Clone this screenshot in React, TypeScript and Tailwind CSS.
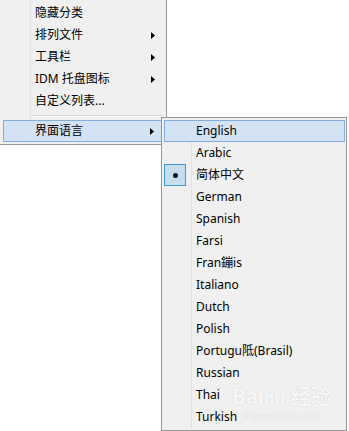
import React from 'react';

const mainItems: { label: string; arrow?: boolean }[] = [
  { label: '隐藏分类' },
  { label: '排列文件', arrow: true },
  { label: '工具栏', arrow: true },
  { label: 'IDM 托盘图标', arrow: true },
  { label: '自定义列表...' },
];

const languages = [
  'English',
  'Arabic',
  '简体中文',
  'German',
  'Spanish',
  'Farsi',
  'Fran鏰is',
  'Italiano',
  'Dutch',
  'Polish',
  'Portugu阺(Brasil)',
  'Russian',
  'Thai',
  'Turkish',
];

const Arrow = () => (
  <svg width="4" height="7" viewBox="0 0 4 7" className="ml-auto mr-[8px] shrink-0">
    <polygon points="0,0 4,3.5 0,7" fill="#000" />
  </svg>
);

const App: React.FC = () => {
  return (
    <div
      className="relative w-[349px] h-[431px] bg-white overflow-hidden text-[12px] text-black"
      style={{ fontFamily: '"Noto Sans", "Noto Sans CJK SC", sans-serif' }}
    >
      {/* main context menu */}
      <div className="absolute left-[-1px] top-[-1px] w-[168px] border border-[#979797] bg-[#f0f0f0] px-[3px] py-[2px]">
        <div className="absolute left-[30px] top-0 bottom-0 w-px bg-[#e2e2e2]" />
        {mainItems.map(item => (
          <div key={item.label} className="relative flex items-center h-[22px] pl-[32px]">
            <span className="leading-none">{item.label}</span>
            {item.arrow && <Arrow />}
          </div>
        ))}
        <div className="relative h-[8px] flex items-center pl-[28px]">
          <div className="w-full h-[2px] border-t border-[#d7d7d7] border-b border-b-white" />
        </div>
        <div className="relative flex items-center h-[22px] pl-[31px] border border-[#84acdd] bg-[#d3e3f3]">
          <span className="leading-none">界面语言</span>
          <Arrow />
        </div>
      </div>

      {/* language submenu */}
      <div className="absolute left-[161px] top-[117px] w-[186px] border border-[#979797] bg-[#f0f0f0] pl-[2px] pr-[1px] py-[2px]">
        <div className="absolute left-[29px] top-[2px] bottom-[2px] w-px bg-[#e2e2e2]" />
        {languages.map((lang, i) => (
          <div
            key={lang}
            className={`relative flex items-center h-[22px] ${
              i === 0 ? 'border border-[#84acdd] bg-[#d3e3f3] pl-[31px]' : 'pl-[32px]'
            }`}
          >
            {lang === '简体中文' && (
              <div className="absolute left-0 top-0 w-[22px] h-[22px] border border-[#3c9ad8] bg-[#c4def0] flex items-center justify-center">
                <div className="w-[5px] h-[5px] rounded-full bg-[#111]" />
              </div>
            )}
            <span className="leading-none">{lang}</span>
          </div>
        ))}
      </div>

      {/* watermark */}
      <div className="absolute left-[232px] top-[386px] flex flex-col items-center text-white/85 pointer-events-none">
        <div className="h-[20px] text-[21px] font-bold leading-[20px] tracking-tight [text-shadow:0_0_1px_rgba(0,0,0,0.2)]">
          Bai<span className="text-[18px]">du</span> 经验
        </div>
        <div className="h-[10px] text-[9px] leading-[10px] mt-[5px] [text-shadow:0_0_1px_rgba(0,0,0,0.2)]">jingyan.baidu.com</div>
      </div>
    </div>
  );
};

export default App;
